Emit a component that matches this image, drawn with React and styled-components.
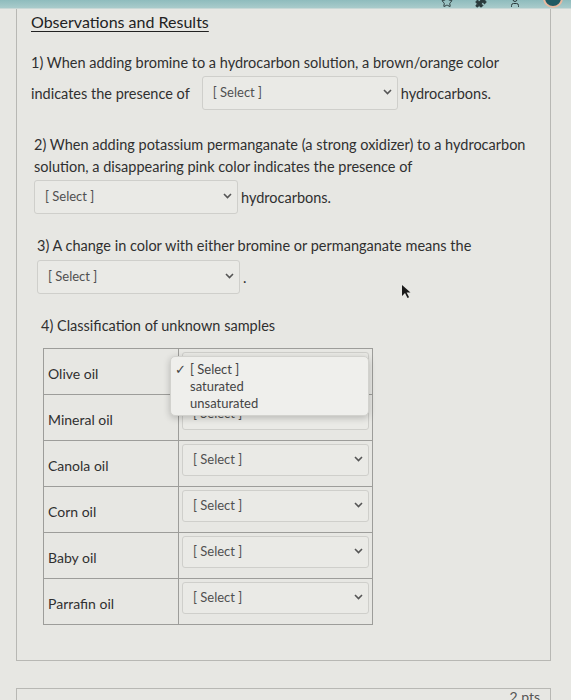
import React from "react";
import styled, { createGlobalStyle } from "styled-components";
import { Star, Puzzle, User } from "lucide-react";

const GlobalStyle = createGlobalStyle`
  body {
    margin: 0;
    background: #e7e7e3;
    font-family: Lato, "Open Sans", "Liberation Sans", sans-serif;
    color: #303030;
  }
`;

const Chrome = styled.div`
  display: flex;
  justify-content: flex-end;
  align-items: flex-end;
  gap: 22px;
  height: 8px;
  padding-right: 8px;
  overflow: hidden;
  background: linear-gradient(#8fbcbd, #a9cbcb);
  border-bottom: 1px solid #c9d8d6;
  color: #2a3a3c;
`;

const Avatar = styled.div`
  width: 16px;
  height: 16px;
  border-radius: 50%;
  background: #1f5a63;
  border: 2px solid #e7b9a0;
`;

const Page = styled.div`
  position: relative;
  height: 691px;
  overflow: hidden;
  padding: 0 20px 0 16px;
`;

const Panel = styled.div`
  border: 1px solid #b8b8b4;
  border-top: none;
  padding: 3px 16px 35px 14px;
`;

const Heading = styled.h3`
  margin: 0;
  font-size: 16px;
  font-weight: 400;
  line-height: 20px;
  color: #222;
  text-decoration: underline;
  text-underline-offset: 3px;
`;

const Question = styled.div`
  margin-top: ${({ top }) => top}px;
  margin-left: ${({ indent }) => indent || 0}px;
`;

const Line = styled.p`
  margin: 0;
  font-size: 14.5px;
  line-height: 22px;
  white-space: nowrap;
`;

const Row = styled.div`
  display: flex;
  align-items: center;
  margin-top: ${({ top }) => top || 2}px;
  font-size: 14.5px;
`;

const Lead = styled.span`
  margin-right: 12px;
`;

const Select = styled.div`
  display: flex;
  align-items: center;
  justify-content: space-between;
  box-sizing: border-box;
  width: ${({ w }) => w}px;
  height: ${({ h }) => h || 34}px;
  margin: ${({ m }) => m || "0 3px 0 0"};
  padding: 0 5px 2px 10px;
  border: 1px solid #cfcfcb;
  border-radius: 3px;
  background: #eaeae6;
  font-size: 13px;
  color: #505050;
`;

const Chevron = () => (
  <svg width="9" height="6" viewBox="0 0 9 6">
    <path d="M1 1l3.5 3.5L8 1" fill="none" stroke="#555" strokeWidth="1.6" />
  </svg>
);

const Dropdown = ({ w, h, m }) => (
  <Select w={w} h={h} m={m}>
    <span>[ Select ]</span>
    <Chevron />
  </Select>
);

const Table = styled.table`
  margin: 11px 0 0 12px;
  border-collapse: collapse;
  width: 330px;
`;

const Td = styled.td`
  border: 1px solid #9d9d9a;
  height: 45px;
  padding: 0;
  font-size: 14px;
  vertical-align: ${({ top }) => (top ? "top" : "middle")};
  width: ${({ w }) => w}px;
  position: relative;
`;

const Label = styled.span`
  display: block;
  padding: 4px 0 0 4px;
`;

const Popup = styled.div`
  position: absolute;
  top: 7px;
  left: -9px;
  width: 199px;
  box-sizing: border-box;
  padding: 4px 4px 3px 4px;
  background: #efefec;
  border: 1px solid #d2d2ce;
  border-radius: 5px;
  box-shadow: 0 2px 7px rgba(0, 0, 0, 0.22);
  font-size: 13px;
  line-height: 17px;
  color: #444;
  z-index: 2;
`;

const Option = styled.div`
  display: flex;
  gap: 4px;
  padding-left: ${({ checked }) => (checked ? 0 : 15)}px;
`;

const Cursor = styled.svg`
  position: absolute;
  left: 401px;
  top: 275px;
`;

const NextPanel = styled.div`
  margin-top: 27px;
  border: 1px solid #b8b8b4;
  border-bottom: none;
  padding: 0 10px 0 0;
  text-align: right;
  font-size: 14px;
  line-height: 16px;
  color: #555;
`;

const samples = [
  "Olive oil",
  "Mineral oil",
  "Canola oil",
  "Corn oil",
  "Baby oil",
  "Parrafin oil",
];

export default function App() {
  return (
    <>
      <GlobalStyle />
      <Chrome>
        <Star size={12} />
        <Puzzle size={12} fill="#2a3a3c" />
        <User size={12} />
        <Avatar />
      </Chrome>
      <Page>
        <Panel>
          <Heading>Observations and Results</Heading>

          <Question top={20}>
            <Line>
              1) When adding bromine to a hydrocarbon solution, a brown/orange
              color
            </Line>
            <Row>
              <Lead>indicates the presence of</Lead>
              <Dropdown w={196} />
              <span>hydrocarbons.</span>
            </Row>
          </Question>

          <Question top={24} indent={3}>
            <Line>
              2) When adding potassium permanganate (a strong oxidizer) to a
              hydrocarbon
            </Line>
            <Line>
              solution, a disappearing pink color indicates the presence of
            </Line>
            <Row>
              <Dropdown w={204} />
              <span>hydrocarbons.</span>
            </Row>
          </Question>

          <Question top={21} indent={6}>
            <Line>
              3) A change in color with either bromine or permanganate means
              the
            </Line>
            <Row top={3}>
              <Dropdown w={203} />
              <span>.</span>
            </Row>
          </Question>

          <Question top={21} indent={10}>
            <Line>4) Classification of unknown samples</Line>
          </Question>

          <Table>
            <tbody>
              {samples.map((name, i) => (
                <tr key={name}>
                  <Td w={137}>
                    <Label>{name}</Label>
                  </Td>
                  <Td w={193} top>
                    <Dropdown w={187} h={32} m="3px 3px 10px 3px" />
                    {i === 0 && (
                      <Popup>
                        <Option checked>
                          <span>✓</span>
                          <span>[ Select ]</span>
                        </Option>
                        <Option>saturated</Option>
                        <Option>unsaturated</Option>
                      </Popup>
                    )}
                  </Td>
                </tr>
              ))}
            </tbody>
          </Table>
        </Panel>
        <NextPanel>2 pts</NextPanel>
        <Cursor width="10" height="15" viewBox="0 0 10 15">
          <path d="M1 1v11l3-3 2.5 5 1.6-.8L5.6 8.4H9.5z" fill="#1a1a1a" />
        </Cursor>
      </Page>
    </>
  );
}
